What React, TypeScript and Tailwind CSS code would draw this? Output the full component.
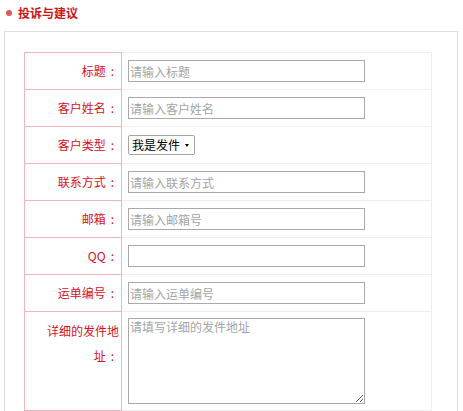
import React from "react";

type Field = {
    label: string[];
    placeholder?: string;
    kind: "input" | "select" | "textarea";
};

const fields: Field[] = [
    { label: ["标题"], placeholder: "请输入标题", kind: "input" },
    { label: ["客户姓名"], placeholder: "请输入客户姓名", kind: "input" },
    { label: ["客户类型"], kind: "select" },
    { label: ["联系方式"], placeholder: "请输入联系方式", kind: "input" },
    { label: ["邮箱"], placeholder: "请输入邮箱号", kind: "input" },
    { label: ["QQ"], placeholder: "", kind: "input" },
    { label: ["运单编号"], placeholder: "请输入运单编号", kind: "input" },
    { label: ["详细的发件地", "址"], placeholder: "请填写详细的发件地址", kind: "textarea" },
];

const font = { fontFamily: '"Noto Sans CJK SC", "Noto Sans", sans-serif' };

export default function App() {
    return (
        <div className="w-[463px] h-[411px] overflow-hidden bg-white text-[12px]" style={font}>
            <div className="flex items-center h-[31px] pl-[6px] pb-[6px]">
                <span className="w-[6px] h-[6px] rounded-full bg-[#dd5a5a]" />
                <span className="ml-[6px] font-bold text-[12px] text-[#cc1515] leading-none">投诉与建议</span>
            </div>

            <div className="ml-[4px] w-[454px] border border-[#dddddd] pt-[20px] pl-[19px] pb-[40px]">
                <div className="w-[408px]">
                    {fields.map((f, i) => {
                        const first = i === 0;
                        const tall = f.kind === "textarea";
                        const last = f.label.length - 1;
                        return (
                            <div
                                key={f.label.join("")}
                                className={
                                    "flex " +
                                    (tall ? "h-[99px]" : first ? "h-[38px]" : "h-[37px]")
                                }
                            >
                                <div
                                    className={
                                        "w-[98px] shrink-0 border-l border-r border-b border-[#efb6bb] text-right text-[#d4101e] " +
                                        (first ? "border-t " : "") +
                                        (tall ? "pt-[6px] pr-[2px] leading-[25px]" : "flex items-center justify-end pr-[7px]")
                                    }
                                >
                                    {f.label.map((line, j) => (
                                        <div key={line} className={j === last && tall ? "pr-[5px]" : ""}>
                                            {line}
                                            {j === last && <span className="ml-[5px]">:</span>}
                                        </div>
                                    ))}
                                </div>
                                <div
                                    className={
                                        "flex-1 border-r border-b border-[#eeeeee] pl-[6px] " +
                                        (first ? "border-t " : "") +
                                        (tall ? "pt-[6px]" : "flex items-center")
                                    }
                                >
                                    {f.kind === "input" && (
                                        <input
                                            type="text"
                                            placeholder={f.placeholder}
                                            className="w-[237px] h-[22px] border border-[#a9a9a9] px-[1px] text-[12px] text-black placeholder:text-[#a4a4a4] outline-none"
                                            style={font}
                                        />
                                    )}
                                    {f.kind === "select" && (
                                        <div className="flex items-center w-[67px] h-[20px] border border-[#a6a6a6] rounded-[2px] pl-[3px] pr-[5px] text-black">
                                            <span className="flex-1 leading-none text-[12px]">我是发件</span>
                                            <span className="w-0 h-0 border-l-[2px] border-r-[2px] border-t-[3px] border-l-transparent border-r-transparent border-t-black" />
                                        </div>
                                    )}
                                    {f.kind === "textarea" && (
                                        <textarea
                                            placeholder={f.placeholder}
                                            className="block w-[237px] h-[86px] border border-[#a9a9a9] px-[1px] py-0 text-[12px] leading-[16px] text-black placeholder:text-[#a4a4a4] outline-none"
                                            style={font}
                                        />
                                    )}
                                </div>
                            </div>
                        );
                    })}
                </div>
            </div>
        </div>
    );
}
